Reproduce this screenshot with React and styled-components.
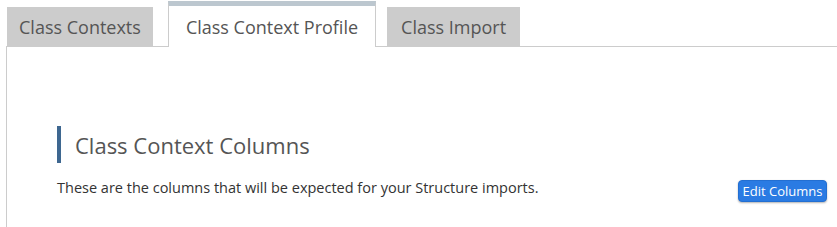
import React from 'react';
import styled, { createGlobalStyle } from 'styled-components';

const GlobalStyle = createGlobalStyle`
  body {
    margin: 0;
    background: #ffffff;
    font-family: "Open Sans", "Liberation Sans", sans-serif;
  }
`;

const Page = styled.div`
  padding: 2px 0 0 6px;
  width: 837px;
  box-sizing: border-box;
  overflow: hidden;
`;

const TabList = styled.ul`
  display: flex;
  align-items: flex-end;
  list-style: none;
  margin: 0;
  padding: 0 0 0 1px;
  height: 44px;
  border-bottom: 1px solid #cccccc;
`;

const Tab = styled.li`
  display: flex;
  align-items: center;
  box-sizing: border-box;
  height: ${(p) => (p.$active ? '46px' : '39px')};
  padding: ${(p) => p.$pad};
  margin-right: ${(p) => p.$gap || '0'};
  margin-bottom: ${(p) => (p.$active ? '-1px' : '0')};
  background: ${(p) => (p.$active ? '#ffffff' : '#cccccc')};
  border: ${(p) => (p.$active ? '1px solid #cccccc' : 'none')};
  border-top: ${(p) => (p.$active ? '5px solid #bcc7cf' : 'none')};
  border-bottom: none;
  color: #555555;
  font-size: 18px;
  cursor: pointer;
`;

const Panel = styled.div`
  border-left: 1px solid #cccccc;
  padding: 79px 10px 30px 50px;
`;

const Heading = styled.h2`
  margin: 0;
  border-left: 4px solid #3e6790;
  padding-left: 14px;
  height: 37px;
  display: flex;
  align-items: center;
  font-size: 22px;
  font-weight: 400;
  color: #555555;
`;

const Row = styled.div`
  display: flex;
  justify-content: space-between;
  align-items: flex-start;
  margin-top: 15px;
`;

const Text = styled.p`
  margin: 0;
  font-size: 14.5px;
  line-height: 20px;
  color: #333333;
`;

const Button = styled.button`
  box-sizing: border-box;
  font-family: inherit;
  font-size: 13px;
  color: #ffffff;
  background: #2a7be3;
  border: 1px solid #236fd2;
  border-radius: 4px;
  width: 89px;
  height: 22px;
  padding: 0;
  margin-top: 2px;
  box-shadow: 0 1px 2px rgba(0, 0, 0, 0.3);
  cursor: pointer;
`;

export default function App() {
  return (
    <>
      <GlobalStyle />
      <Page>
        <TabList>
          <Tab $pad="0 12px" $gap="15px">Class Contexts</Tab>
          <Tab $active $pad="0 17px" $gap="11px">Class Context Profile</Tab>
          <Tab $pad="0 14px">Class Import</Tab>
        </TabList>
        <Panel>
          <Heading>Class Context Columns</Heading>
          <Row>
            <Text>These are the columns that will be expected for your Structure imports.</Text>
            <Button>Edit Columns</Button>
          </Row>
        </Panel>
      </Page>
    </>
  );
}
